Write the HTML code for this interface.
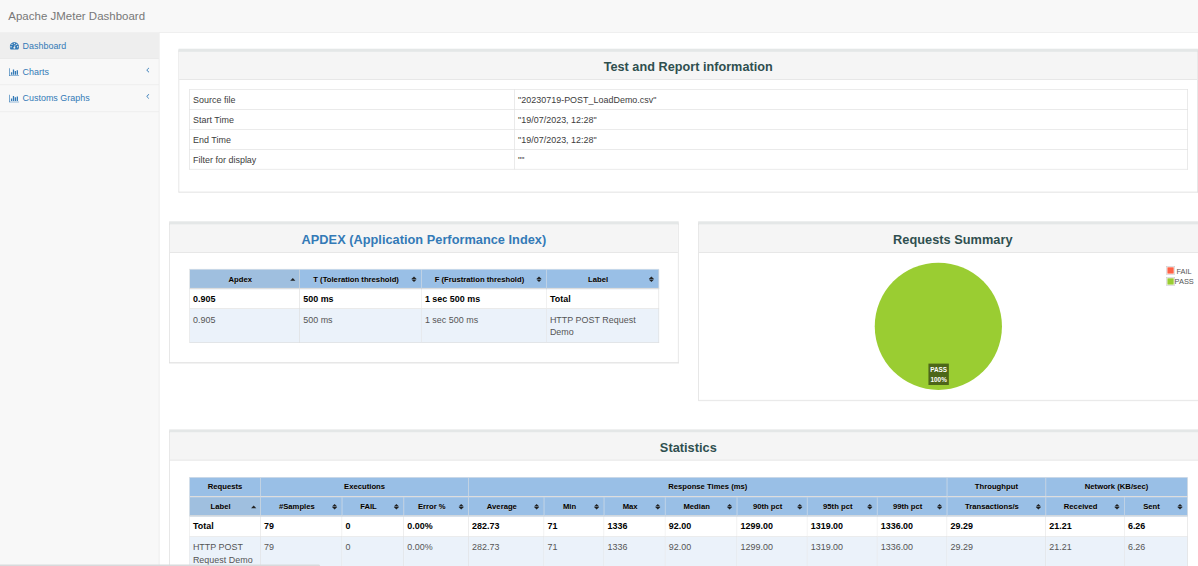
<!DOCTYPE html>
<html>
<head>
<meta charset="utf-8">
<title>Apache JMeter Dashboard</title>
<style>
*{box-sizing:border-box;margin:0;padding:0}
html,body{width:1198px;height:566px;overflow:hidden;background:#fff}
#wrap{position:absolute;left:0;top:0;width:11980px;height:5660px;transform:scale(.1);transform-origin:0 0;overflow:hidden}
#page{position:absolute;left:0;top:0;width:11980px;height:5660px;overflow:hidden;background:#fff;font-family:"Liberation Sans",sans-serif;font-size:89.6px;line-height:127px;color:#333}
.abs{position:absolute}
#nav{left:0;top:0;width:11980px;height:327px;background:#f8f8f8;border-bottom:6.4px solid #e7e7e7}
#brand{left:83px;top:93px;font-size:115px;line-height:130px;color:#777;white-space:nowrap}
#side{left:0;top:326px;width:1594px;height:5340px;background:#f8f8f8;border-right:6.4px solid #e7e7e7}
.si{position:absolute;left:0;width:1589px;height:262.4px;border-bottom:6.4px solid #e7e7e7;color:#337ab7}
.si.act{background:#eee}
.si span.t{position:absolute;left:225px;top:66px;white-space:nowrap}
.si svg.ic{position:absolute;left:92px;top:82px}
.si svg.ch{position:absolute;left:1461px;top:65px}
.panel{position:absolute;background:#fff;border:7px solid #ddd;border-top:32px solid #e4e7e7;box-shadow:0 6.4px 6.4px rgba(0,0,0,.05)}
.ph{position:absolute;left:0;top:0;right:0;background:#f5f5f5;border-bottom:6.4px solid #ddd;text-align:center;font-weight:bold;font-size:127px;color:#2f4f4f;white-space:nowrap}
table{border-collapse:collapse;table-layout:fixed;position:absolute}
#info td{border:6.4px solid #ddd;padding:0 0 0 33px;height:199px;vertical-align:middle;color:#3c3c3c;white-space:nowrap}
#info tr.n td{padding-top:12px}
.ts{border-collapse:separate;border-spacing:0;border:solid #ddd;border-width:6.4px 0 0 6.4px;background:#fff}
.ts th,.ts td{border:solid #ddd;border-width:0 6.4px 6.4px 0;overflow:hidden}
.ts th{background:#99bfe6;color:#000;font-weight:bold;font-size:76.8px;line-height:114px;text-align:center;padding:3px 114px 0 25px;text-shadow:0 10px 0 rgba(204,204,204,.7);position:relative;white-space:nowrap;vertical-align:middle}
.ts th.g{padding:3px 25px 0}
.ts th{border-bottom-width:12.8px}
.ts td{padding:40px 0 0 32px;line-height:129px;vertical-align:top;color:#555;white-space:nowrap}
.ts tr.tot td{font-weight:bold;color:#000;background:#fff}
.ts tr.odd td{background:#ebf2fa}
.ts th i{position:absolute;right:45px;top:50%;width:52px;height:56px;margin-top:-23px}
.ts th i:before,.ts th i:after{content:"";position:absolute;left:0;border-left:26px solid transparent;border-right:26px solid transparent}
.ts th i:before{top:0;border-bottom:25px solid #222}
.ts th i:after{bottom:0;border-top:25px solid #222}
.ts th i.up:after{display:none}
.ts th i.up:before{top:16px;border-bottom-width:28px}
.ts th i.up{right:40px}
.ts th.s{background:#9fbfdf}
.st th,.st th.g{padding-top:0;padding-bottom:5px}
.lb{width:204px;text-align:center;color:#fff;font-weight:bold;font-size:64px;line-height:90px;white-space:nowrap}
.lg{width:88px;height:88px;border:6.4px solid #ccc;background:#fff}
.lg b{position:absolute;left:6.4px;top:6.4px;width:62.4px;height:62.4px}
.lt{font-size:74.5px;line-height:100px;color:#545454;white-space:nowrap}
.ts tr.r2 td{padding-top:35px}
.ts tr.t2 td{padding-top:33px}
.ts tr.t3 td{padding-top:34px}
</style>
</head>
<body>
<div id="wrap"><div id="page">
<div id="nav" class="abs"><div id="brand" class="abs">Apache JMeter Dashboard</div></div>
<div id="side" class="abs">
  <div class="si act" style="top:0"><svg class="ic" style="left:96.5px;top:81px" width="93.5" height="93.5" viewBox="0 0 1792 1792"><path fill="#337ab7" fill-rule="evenodd" d="M384 1152q0-53-37.500-90.500t-90.500-37.500-90.500 37.500-37.500 90.500 37.500 90.500 90.500 37.500 90.500-37.500 37.500-90.500zM576 704q0-53-37.500-90.500t-90.500-37.500-90.500 37.500-37.500 90.500 37.500 90.500 90.500 37.500 90.500-37.500 37.500-90.500zM1004 1185l101-382q6-26-7.500-48.500t-38.500-29.500-48 6.500-30 39.500l-101 382q-60 5-107 43.500t-63 98.500q-20 77 20 146t117 89 146-20 89-117q16-60-6-117t-72-91zM1664 1152q0-53-37.500-90.500t-90.500-37.500-90.500 37.500-37.500 90.500 37.500 90.500 90.500 37.500 90.500-37.500 37.500-90.500zM1024 512q0-53-37.500-90.500t-90.500-37.500-90.500 37.500-37.500 90.500 37.500 90.500 90.500 37.500 90.500-37.500 37.500-90.500zM1472 704q0-53-37.500-90.500t-90.500-37.500-90.500 37.500-37.500 90.500 37.500 90.500 90.500 37.500 90.500-37.500 37.500-90.500zM1792 1152q0 261-141 483-19 29-54 29h-1402q-35 0-54-29-141-221-141-483 0-182 71-348t191-286 286-191 348-71 348 71 286 191 191 286 71 348z"/></svg><span class="t">Dashboard</span></div>
  <div class="si" style="top:262.4px"><svg class="ic" style="left:89.5px;top:89px" width="102.5" height="89.7" viewBox="0 0 2048 1792"><path fill="#337ab7" d="M640 896v512h-256v-512h256zm384-512v1024h-256v-1024h256zm1024 1152v128h-2048v-1536h128v1408h1920zm-640-896v768h-256v-768h256zm384-128v896h-256v-896h256z"/></svg><span class="t">Charts</span><svg class="ch" width="33" height="90" viewBox="0 0 660 1792"><path fill="#337ab7" d="M627 544q0 13-10 23l-393 393 393 393q10 10 10 23t-10 23l-50 50q-10 10-23 10t-23-10l-466-466q-10-10-10-23t10-23l466-466q10-10 23-10t23 10l50 50q10 10 10 23z"/></svg></div>
  <div class="si" style="top:524.8px;height:270px"><svg class="ic" style="left:89.5px;top:89px" width="102.5" height="89.7" viewBox="0 0 2048 1792"><path fill="#337ab7" d="M640 896v512h-256v-512h256zm384-512v1024h-256v-1024h256zm1024 1152v128h-2048v-1536h128v1408h1920zm-640-896v768h-256v-768h256zm384-128v896h-256v-896h256z"/></svg><span class="t">Customs Graphs</span><svg class="ch" width="33" height="90" viewBox="0 0 660 1792"><path fill="#337ab7" d="M627 544q0 13-10 23l-393 393 393 393q10 10 10 23t-10 23l-50 50q-10 10-23 10t-23-10l-466-466q-10-10-10-23t10-23l466-466q10-10 23-10t23 10l50 50q10 10 10 23z"/></svg></div>
</div>

<!-- info panel -->
<div class="panel" style="left:1785px;top:487px;width:10194px;height:1437px">
  <div class="ph" style="height:280px;line-height:280px;padding-top:10px">Test and Report information</div>
  <table id="info" style="left:100px;top:374px;width:9988px">
    <colgroup><col style="width:3250px"><col></colgroup>
    <tr><td>Source file</td><td>"20230719-POST_LoadDemo.csv"</td></tr>
    <tr><td>Start Time</td><td>"19/07/2023, 12:28"</td></tr>
    <tr class="n"><td>End Time</td><td>"19/07/2023, 12:28"</td></tr>
    <tr class="n"><td>Filter for display</td><td>""</td></tr>
  </table>
</div>

<!-- apdex panel -->
<div class="panel" style="left:1692px;top:2213px;border-top-width:34px;width:5094px;height:1416px">
  <div class="ph" style="height:282px;line-height:276px;padding-top:10px;padding-bottom:6px;font-size:128px;color:#337ab7">APDEX (Application Performance Index)</div>
  <table class="ts" style="left:194px;top:442px;width:4698px">
    <colgroup><col style="width:1101px"><col style="width:1217px"><col style="width:1250px"><col></colgroup>
    <tr style="height:196px"><th class="s">Apdex<i class="up"></i></th><th>T (Toleration threshold)<i></i></th><th>F (Frustration threshold)<i></i></th><th>Label<i></i></th></tr>
    <tr class="tot t3" style="height:199px"><td>0.905</td><td>500 ms</td><td>1 sec 500 ms</td><td>Total</td></tr>
    <tr class="odd" style="height:340px"><td>0.905</td><td>500 ms</td><td>1 sec 500 ms</td><td style="white-space:normal">HTTP POST Request Demo</td></tr>
  </table>
</div>

<!-- requests summary -->
<div class="panel" style="left:6982px;top:2213px;border-top-width:34px;width:5092px;height:1793px">
  <div class="ph" style="height:282px;line-height:276px;padding-top:10px;padding-bottom:6px;font-size:128px">Requests Summary</div>
  <svg class="abs" style="left:0;top:280px" width="5000" height="1480" viewBox="0 0 500 148">
    <circle cx="239.45" cy="73.6" r="63.6" fill="#9acd32"/>
    <rect x="229.55" y="110.9" width="20.4" height="21.4" fill="#000" fill-opacity=".5"/>
  </svg>
  <div class="abs lb" style="left:2295.5px;top:1404px">PASS</div>
  <div class="abs lb" style="left:2295.5px;top:1503px">100%</div>
  <div class="abs lg" style="left:4673px;top:414px"><b style="background:#ff6347"></b></div>
  <div class="abs lg" style="left:4673px;top:524px"><b style="background:#9acd32"></b></div>
  <div class="abs lt" style="left:4775px;top:419px">FAIL</div>
  <div class="abs lt" style="left:4756px;top:519px">PASS</div>
</div>

<!-- statistics -->
<div class="panel" style="left:1692px;top:4294px;width:10382px;height:2000px">
  <div class="ph" style="height:278px;line-height:278px;padding-top:10px;font-size:128px">Statistics</div>
  <table class="ts st" style="left:192px;top:444px;width:9986px">
    <colgroup>
      <col style="width:712px"><col style="width:814px"><col style="width:618px"><col style="width:648px">
      <col style="width:754px"><col style="width:600px"><col style="width:612px"><col style="width:718px">
      <col style="width:702px"><col style="width:700px"><col style="width:698px"><col style="width:988px">
      <col style="width:786px"><col>
    </colgroup>
    <tr style="height:196px"><th class="g">Requests</th><th class="g" colspan="3">Executions</th><th class="g" colspan="7">Response Times (ms)</th><th class="g">Throughput</th><th class="g" colspan="2">Network (KB/sec)</th></tr>
    <tr style="height:192px"><th class="s">Label<i class="up"></i></th><th>#Samples<i></i></th><th>FAIL<i></i></th><th>Error %<i></i></th><th>Average<i></i></th><th>Min<i></i></th><th>Max<i></i></th><th>Median<i></i></th><th>90th pct<i></i></th><th>95th pct<i></i></th><th>99th pct<i></i></th><th>Transactions/s<i></i></th><th>Received<i></i></th><th>Sent<i></i></th></tr>
    <tr class="tot t2" style="height:205px"><td>Total</td><td>79</td><td>0</td><td>0.00%</td><td>282.73</td><td>71</td><td>1336</td><td>92.00</td><td>1299.00</td><td>1319.00</td><td>1336.00</td><td>29.29</td><td>21.21</td><td>6.26</td></tr>
    <tr class="odd r2" style="height:400px"><td style="white-space:normal">HTTP POST Request Demo</td><td>79</td><td>0</td><td>0.00%</td><td>282.73</td><td>71</td><td>1336</td><td>92.00</td><td>1299.00</td><td>1319.00</td><td>1336.00</td><td>29.29</td><td>21.21</td><td>6.26</td></tr>
  </table>
</div>

<div class="abs" style="left:0;top:5644px;width:3202px;height:40px;background:#d8dadc;border-top-right-radius:15px"></div>
</div></div>
</body>
</html>
